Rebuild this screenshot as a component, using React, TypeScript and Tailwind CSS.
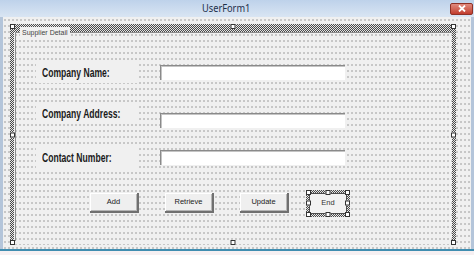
import React from 'react';

const dots =
  'bg-[#f0f0f0] bg-[image:radial-gradient(circle,#b0b0b0_0.6px,transparent_0.9px)] bg-[length:4px_6px]';
const checker =
  'bg-[image:repeating-conic-gradient(#4a4a4a_0%_25%,#e6e6e6_0%_50%)] bg-[length:2px_2px]';

const Handle = ({ className }: { className: string }) => (
  <span className={`absolute w-[5px] h-[5px] bg-white border border-[#333] ${className}`} />
);

const FieldRow = ({
  label,
  mt,
  labelClass = '',
}: {
  label: string;
  mt: string;
  labelClass?: string;
}) => (
  <div className={`flex items-center h-[15px] ${mt}`}>
    <div className={`w-[102px] h-[20px] pl-[6px] flex items-center bg-[#f0f0f0] ${labelClass}`}>
      <span className="inline-block origin-left scale-x-[0.66] whitespace-nowrap font-bold text-[13px] text-[#1a1a1a]">
        {label}
      </span>
    </div>
    <div className="ml-[22px] w-[185px] h-[15px] bg-white border-t border-l border-[#8a8a8a] shadow-[inset_1px_1px_0_#c4c4c4]" />
  </div>
);

const FormButton = ({ label, className = '' }: { label: string; className?: string }) => (
  <button
    className={`h-[20px] w-[49px] bg-[#efefef] text-[7.5px] text-[#222] border-r-2 border-b-2 border-[#707070] shadow-[inset_1px_1px_0_#ffffff,inset_-1px_-1px_0_#b5b5b5] ${className}`}
  >
    {label}
  </button>
);

export default function App() {
  return (
    <div className="w-[474px] h-[255px] overflow-hidden flex flex-col bg-[#f6f0f2] font-['Liberation_Sans',Arial,sans-serif]">
      {/* title bar */}
      <div className="h-[17px] flex items-center bg-gradient-to-b from-[#bed2ea] to-[#d9e5f3]">
        <span className="ml-[202px] inline-block origin-left scale-x-[0.84] whitespace-nowrap font-['Noto_Sans',sans-serif] text-[11px] text-[#1d2f4a]">
          UserForm1
        </span>
        <div className="ml-auto mr-[1px] w-[23px] h-[12px] rounded-[2px] border border-[#8e3126] bg-gradient-to-b from-[#e08a7e] to-[#c13b2c] flex items-center justify-center">
          <svg width="8" height="7" viewBox="0 0 8 7">
            <path d="M1 0.5 L7 6.5 M7 0.5 L1 6.5" stroke="#fff" strokeWidth="1.8" />
          </svg>
        </div>
      </div>

      {/* form body */}
      <div className={`h-[232px] border-l-[3px] border-r-[3px] border-[#b4c5da] pt-[7px] pl-[7px] ${dots}`}>
        <div className={`relative w-[446px] h-[221px] p-[4px] ${checker}`}>
          <Handle className="left-0 top-0" />
          <Handle className="left-1/2 -translate-x-1/2 top-0" />
          <Handle className="right-0 top-0" />
          <Handle className="left-0 top-1/2 -translate-y-1/2" />
          <Handle className="right-0 top-1/2 -translate-y-1/2" />
          <Handle className="left-0 bottom-0" />
          <Handle className="left-1/2 -translate-x-1/2 bottom-0" />
          <Handle className="right-0 bottom-0" />

          <div className={`h-full ${dots}`}>
            <div className="ml-[1px] mt-[4px] h-[calc(100%-4px)] border-t border-l border-[#8c8c8c]">
              <span className="block w-fit -mt-[6px] ml-[4px] px-[2px] bg-[#f0f0f0] text-[7px] leading-[11px] text-[#444]">
                Supplier Detail
              </span>

              <div className="pl-[20px]">
                <FieldRow label="Company Name:" mt="mt-[27px]" />
                <FieldRow label="Company Address:" mt="mt-[33px]" labelClass="self-start -mt-[9px]" />
                <FieldRow label="Contact Number:" mt="mt-[22px]" />

                <div className="flex items-center h-[20px] mt-[28px]">
                  <FormButton label="Add" className="ml-[54px] w-[48px]" />
                  <FormButton label="Retrieve" className="ml-[26px]" />
                  <FormButton label="Update" className="ml-[26px]" />
                  <div className={`relative ml-[17px] p-[3px] ${checker}`}>
                    <button className="block w-[38px] h-[21px] bg-[#f2f2f2] border border-[#4d4d4d] text-[7.5px] text-[#333]">
                      End
                    </button>
                    <Handle className="left-0 top-0 w-[4px] h-[4px]" />
                    <Handle className="left-1/2 -translate-x-1/2 top-0 w-[4px] h-[4px]" />
                    <Handle className="right-0 top-0 w-[4px] h-[4px]" />
                    <Handle className="left-0 top-1/2 -translate-y-1/2 w-[4px] h-[4px]" />
                    <Handle className="right-0 top-1/2 -translate-y-1/2 w-[4px] h-[4px]" />
                    <Handle className="left-0 bottom-0 w-[4px] h-[4px]" />
                    <Handle className="left-1/2 -translate-x-1/2 bottom-0 w-[4px] h-[4px]" />
                    <Handle className="right-0 bottom-0 w-[4px] h-[4px]" />
                  </div>
                </div>
              </div>
            </div>
          </div>
        </div>
      </div>

      {/* bottom edge */}
      <div className="h-[2px] bg-[#3f8db0]" />
    </div>
  );
}
